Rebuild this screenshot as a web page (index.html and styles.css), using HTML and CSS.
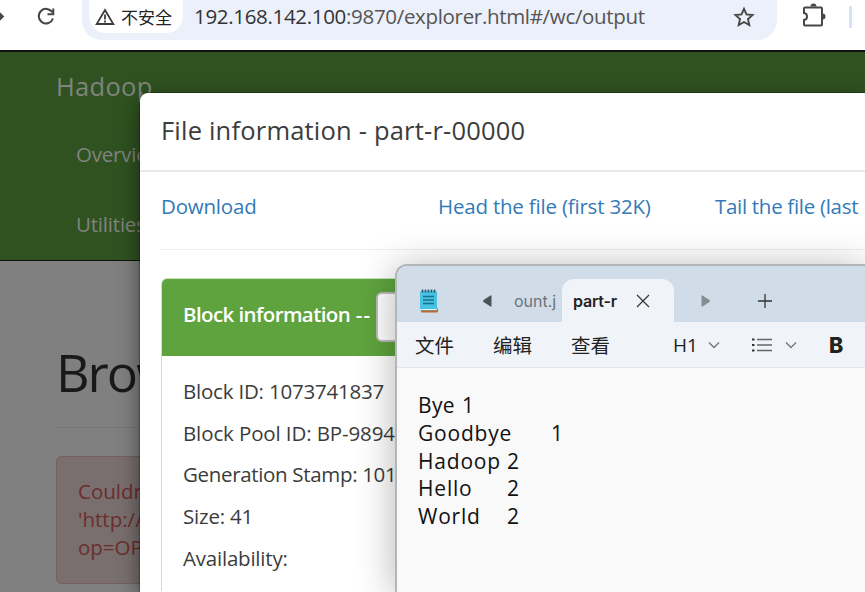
FILE: index.html
```
<!DOCTYPE html>
<html lang="zh-CN">
<head>
<meta charset="UTF-8">
<title>Browsing HDFS</title>
<link rel="stylesheet" href="styles.css">
</head>
<body>
<div class="browser-bar">
	<svg class="nav-icon" width="60" height="34" viewBox="0 0 60 34" fill="none" stroke="#474747" stroke-width="2">
		<path d="M-3 16.500H2M-1 13l3.500 3.500L-1 20" stroke-width="2.500"/>
		<path d="M52.300 12.300A7.300 7.300 0 1 0 53 18.500M53.300 8.500v5.700h-5.800"/>
	</svg>
	<div class="address-bar">
		<div class="security-chip">
			<svg width="20" height="18" viewBox="0 0 20 18" fill="none" stroke="#3c3c3c" stroke-width="1.800">
				<path d="M10 2L18.300 16H1.700z"/>
				<path d="M10 6.500v5M10 12.500v2"/>
			</svg>
			<span>不安全</span>
		</div>
		<span class="url"><span class="host">192.168.142.100</span>:9870/explorer.html#/wc/output</span>
		<svg class="star" width="22" height="22" viewBox="0 0 22 22" fill="none" stroke="#474747" stroke-width="1.900">
			<path d="M11 2.800l2.500 5.600 6.100.6-4.600 4.100 1.300 6L11 16l-5.300 3.100 1.300-6L2.400 9l6.100-.6z"/>
		</svg>
	</div>
	<svg class="puzzle" width="26" height="26" viewBox="0 0 26 26" fill="none" stroke="#474747" stroke-width="2">
		<path d="M3 5.500h16q1 0 1 1v16q0 1-1 1H3q-1 0-1-1v-4.500c4-.5 4-6.500 0-7V6.500q0-1 1-1z"/>
		<path d="M8.500 4.500a3 3 0 0 1 6 0zM20.500 11.500a3 3 0 0 1 0 6z" fill="#474747" stroke="none"/>
	</svg>
	<div class="bar-divider"></div>
</div>

<div class="page">
	<div class="navbar">
		<div class="brand">Hadoop</div>
		<div class="nav-link">Overvie</div>
		<div class="nav-link">Utilities</div>
	</div>
	<div class="page-content">
		<h1>Brow</h1>
		<div class="alert">Couldn<br>'http://<br>op=OP</div>
	</div>
</div>

<div class="modal">
	<div class="modal-header">File information - part-r-00000</div>
	<div class="modal-body">
		<div class="file-links">
			<a class="link-download">Download</a>
			<a class="link-head">Head the file (first 32K)</a>
			<a class="link-tail">Tail the file (last</a>
		</div>
		<div class="panel">
			<div class="panel-heading">
				<span class="panel-title">Block information <span class="dashes">--</span></span>
				<div class="block-select"></div>
			</div>
			<div class="panel-body">
				<p>Block ID: 1073741837</p>
				<p class="pool">Block Pool ID: BP-9894</p>
				<p class="stamp">Generation Stamp: 101</p>
				<p>Size: 41</p>
				<p>Availability:</p>
			</div>
		</div>
	</div>
</div>

<div class="notepad">
	<div class="tab-bar">
		<svg class="app-icon" width="20" height="26" viewBox="0 0 20 26">
			<rect x="2" y="20" width="17" height="4.500" rx="1.500" fill="#c1652a"/>
			<rect x="1" y="3" width="17" height="19.500" rx="1.500" fill="#48c1e3"/>
			<path d="M1 21.500h17" stroke="#d7f1f8"/>
			<path d="M4 8.500h11M4 12h11M4 15.500h11" stroke="#14718f" stroke-width="1.500"/>
			<path d="M3.500 1.500v3M6.500 1.500v3M9.500 1.500v3M12.500 1.500v3M15.500 1.500v3" stroke="#245a70" stroke-width="1.600"/>
		</svg>
		<svg class="scroll-left" width="12" height="14" viewBox="0 0 12 14"><path d="M9.500 2v10q0 1-1 .5L1.500 8q-.9-1 0-2l7-4.500q1-.5 1 .5z" fill="#4c5358"/></svg>
		<span class="old-tab">ount.j</span>
		<div class="active-tab">
			<span>part-r</span>
			<svg width="14" height="14" viewBox="0 0 14 14" stroke="#333" stroke-width="1.200"><path d="M1 1l12 12M13 1L1 13"/></svg>
		</div>
		<svg class="scroll-right" width="12" height="14" viewBox="0 0 12 14"><path d="M1.500 2v10q0 1 1 .5l7-4.500q.9-1 0-2l-7-4.500q-1-.5-1 .5z" fill="#858d94"/></svg>
		<svg class="new-tab" width="16" height="16" viewBox="0 0 16 16" stroke="#333" stroke-width="1.300"><path d="M8 1v14M1 8h14"/></svg>
	</div>
	<div class="menu-bar">
		<span class="menu">文件</span>
		<span class="menu">编辑</span>
		<span class="menu">查看</span>
		<span class="heading-menu">H1</span>
		<svg class="chevron" width="12" height="8" viewBox="0 0 12 8" fill="none" stroke="#777" stroke-width="1.400"><path d="M1 1.500l5 5 5-5"/></svg>
		<svg class="list-icon" width="20" height="14" viewBox="0 0 20 14" stroke="#666" stroke-width="1.500"><path d="M5 1.500h15M5 7h15M5 12.500h15"/><path d="M0 1.500h2.500M0 7h2.500M0 12.500h2.500" stroke="#333" stroke-width="2.200"/></svg>
		<svg class="chevron list-chevron" width="12" height="8" viewBox="0 0 12 8" fill="none" stroke="#777" stroke-width="1.400"><path d="M1 1.500l5 5 5-5"/></svg>
		<span class="bold">B</span>
	</div>
	<div class="note-text">
		<div class="row"><span class="bye">Bye</span><span>1</span></div>
		<div class="row"><span class="goodbye">Goodbye</span><span>1</span></div>
		<div class="row"><span class="word">Hadoop</span><span>2</span></div>
		<div class="row"><span class="word">Hello</span><span>2</span></div>
		<div class="row"><span class="word">World</span><span>2</span></div>
	</div>
</div>
</body>
</html>
```
FILE: styles.css
```
* {
	box-sizing: border-box;
}
body {
	margin: 0;
	width: 865px;
	height: 592px;
	position: relative;
	overflow: hidden;
	background: #fff;
	font-family: "Open Sans", "Noto Sans CJK SC", sans-serif;
	font-size: 20.5px;
	color: #3c3c3c;
	white-space: nowrap;
}
svg {
	display: block;
	flex: none;
}
p {
	margin: 0;
}

/* browser toolbar */
.browser-bar {
	display: flex;
	height: 50px;
	background: #fff;
}
.address-bar {
	display: flex;
	align-items: center;
	width: 695px;
	height: 40px;
	margin-left: 22px;
	padding: 0 22px 7px 7px;
	border-radius: 0 0 20px 20px;
	background: #ebf0fa;
}
.security-chip {
	display: flex;
	align-items: center;
	gap: 6px;
	width: 94px;
	height: 33px;
	padding-left: 6px;
	border-radius: 0 0 17px 17px;
	background: #fff;
	color: #222;
	font-size: 17px;
}
.url {
	margin: -2px 0 0 11px;
	color: #555;
	letter-spacing: -0.32px;
}
.host {
	color: #333;
}
.star {
	margin-left: auto;
}
.puzzle {
	margin: 2px 0 0 25px;
}
.bar-divider {
	width: 3px;
	height: 22px;
	margin: 6px 0 0 21px;
	background: #d3e3fd;
}

/* dimmed page behind the dialog */
.page {
	height: 542px;
	background: #808080;
}
.navbar {
	height: 211px;
	padding: 18px 0 0 56px;
	border-top: 2px solid #101010;
	border-bottom: 1px solid #101010;
	background: #2f5220;
	color: #80847e;
}
.brand {
	height: 32px;
	line-height: 32px;
	font-size: 25.5px;
	letter-spacing: 0.3px;
}
.nav-link {
	height: 30px;
	margin: 37px 0 0 20px;
	line-height: 30px;
	letter-spacing: -0.2px;
}
.nav-link + .nav-link {
	margin-top: 40px;
}
.page-content {
	padding: 80px 0 0 56px;
}
h1 {
	height: 87px;
	margin: 0;
	border-bottom: 1px solid #777;
	font-size: 52px;
	font-weight: normal;
	line-height: 62px;
	letter-spacing: -2px;
	color: #191919;
}
.alert {
	height: 128px;
	margin-top: 28px;
	padding: 20px 21px;
	border: 1px solid #765f61;
	border-radius: 6px;
	background: #796f6f;
	color: #6b2e2d;
	line-height: 28px;
}

/* file information dialog */
.modal {
	position: absolute;
	left: 140px;
	top: 93px;
	width: 725px;
	height: 499px;
	overflow: hidden;
	border-radius: 8px 0 0 0;
	background: #fff;
	box-shadow: 0 0 0 1px rgba(0, 0, 0, 0.25), 0 7px 22px rgba(0, 0, 0, 0.5);
}
.modal-header {
	height: 79px;
	padding: 17px 21px 0;
	border-bottom: 2px solid #e9e9e9;
	font-size: 25.5px;
	line-height: 40px;
	letter-spacing: 0.2px;
}
.modal-body {
	padding: 0 0 0 21px;
}
.file-links {
	display: flex;
	height: 78px;
	padding-top: 19px;
	border-bottom: 1px solid #eee;
	line-height: 30px;
	letter-spacing: -0.2px;
	color: #337ab7;
}
.link-download, .link-head {
	width: 277px;
}
.link-tail {
	letter-spacing: -0.3px;
}
.panel {
	height: 313px;
	margin-top: 28px;
	border: 1px solid #c9e5b5;
	border-bottom: 0;
	border-radius: 6px 0 0 0;
}
.panel-heading {
	display: flex;
	height: 77px;
	border-radius: 5px 0 0 0;
	background: #5fa33e;
	color: #fff;
	font-weight: 600;
}
.panel-title {
	width: 193px;
	padding: 20px 0 0 21px;
	line-height: 30px;
	letter-spacing: -0.6px;
}
.dashes {
	margin-left: 1px;
	letter-spacing: 1px;
}
.block-select {
	width: 200px;
	height: 50px;
	margin: 13px 0 0 21px;
	border: 2px solid #bbb;
	border-radius: 6px;
	background: #fff;
}
.panel-body {
	padding: 20px 21px 0;
	letter-spacing: -0.21px;
}
.panel-body p {
	height: 41.7px;
	line-height: 30px;
}
.panel-body .pool {
	letter-spacing: -0.12px;
}
.panel-body .stamp {
	letter-spacing: -0.33px;
}

/* notepad window */
.notepad {
	position: absolute;
	left: 395px;
	top: 264px;
	width: 470px;
	height: 328px;
	border: 2px solid #b3b6b9;
	border-width: 2px 0 0 2px;
	border-radius: 12px 0 0 0;
	overflow: hidden;
	background: #f9f9f9;
	box-shadow: 0 4px 38px rgba(0, 0, 0, 0.3);
}
.tab-bar {
	display: flex;
	align-items: center;
	height: 56px;
	padding: 13px 0 0 22px;
	background: #d0dce8;
	font-family: Inter, sans-serif;
	font-size: 16px;
	color: #6b747c;
}
.scroll-left {
	margin-left: 43px;
}
.old-tab {
	width: 42px;
	margin-left: 20px;
}
.active-tab {
	display: flex;
	align-items: center;
	align-self: stretch;
	gap: 19px;
	width: 112px;
	margin-left: 6px;
	padding-left: 11px;
	border-radius: 12px 12px 0 0;
	background: #f0f4f8;
	color: #222;
	font-weight: 600;
	letter-spacing: -0.2px;
}
.scroll-right {
	margin-left: 26px;
}
.new-tab {
	margin-left: 45px;
}
.menu-bar {
	display: flex;
	align-items: center;
	height: 46px;
	padding-left: 18px;
	border-bottom: 1px solid #e0e7ee;
	background: #f0f4f8;
	color: #222;
}
.menu {
	width: 78px;
	font-size: 19.5px;
}
.heading-menu {
	width: 25px;
	margin-left: 24px;
	font-size: 19px;
}
.chevron {
	margin-left: 10px;
}
.list-icon {
	margin-left: 32px;
}
.list-chevron {
	margin-left: 13px;
}
.bold {
	margin-left: 32px;
	font-family: Inter, sans-serif;
	font-size: 21.5px;
	font-weight: 800;
}
.note-text {
	padding: 24px 0 0 21px;
	font-size: 21px;
	line-height: 27.8px;
	letter-spacing: 0.35px;
	color: #111;
}
.row {
	display: flex;
}
.bye {
	width: 44px;
}
.goodbye {
	width: 133px;
	letter-spacing: 0.8px;
}
.word {
	width: 89px;
	letter-spacing: 0.8px;
}
```
